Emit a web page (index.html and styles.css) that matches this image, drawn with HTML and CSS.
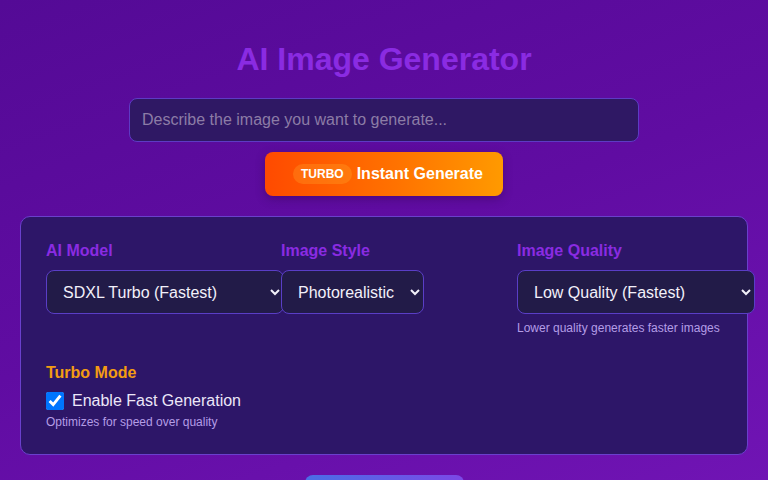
FILE: index.html
```html
<!DOCTYPE html>
<html lang="en">
<head>
<meta charset="utf-8">
<title>AI Image Generator</title>
<link rel="stylesheet" href="styles.css">
</head>
<body>
<div class="container">
  <h1 class="title">AI Image Generator</h1>
  <input class="prompt" type="text" placeholder="Describe the image you want to generate...">
  <button class="turbo-btn"><span class="badge">TURBO</span><span>Instant Generate</span></button>
  <div class="panel">
    <div class="grid">
      <div class="field">
        <label class="label">AI Model</label>
        <select class="select full"><option>SDXL Turbo (Fastest)</option></select>
      </div>
      <div class="field front">
        <label class="label">Image Style</label>
        <select class="select"><option>Photorealistic</option></select>
      </div>
      <div class="field">
        <label class="label">Image Quality</label>
        <select class="select full"><option>Low Quality (Fastest)</option></select>
        <div class="help">Lower quality generates faster images</div>
      </div>
      <div class="field">
        <label class="label turbo">Turbo Mode</label>
        <label class="check"><input type="checkbox" checked><span>Enable Fast Generation</span></label>
        <div class="help tight">Optimizes for speed over quality</div>
      </div>
    </div>
  </div>
  <div class="actions">
    <button class="gen-btn">Generate Image</button>
  </div>
</div>
</body>
</html>
```

FILE: styles.css
```css
html, body {
  margin: 0;
  height: 100%;
}
body {
  background: linear-gradient(160deg, #540a96 0%, #600ca2 50%, #7014b4 100%);
  font-family: "Liberation Sans", Arial, sans-serif;
  color: #ece8f6;
  overflow: hidden;
}
.container {
  padding: 41px 20px 0;
  display: flex;
  flex-direction: column;
  align-items: center;
}
.title {
  margin: 0 0 20px;
  font-size: 32px;
  line-height: 37px;
  font-weight: bold;
  color: #8a2be2;
}
.prompt {
  box-sizing: border-box;
  width: 510px;
  height: 44px;
  padding: 12px;
  font-family: inherit;
  font-size: 16px;
  color: #ece8f6;
  background: #2f1864;
  border: 1px solid #5d3bc4;
  border-radius: 8px;
  outline: none;
}
.prompt::placeholder {
  color: #8c7ca6;
}
.turbo-btn {
  margin-top: 10px;
  box-sizing: border-box;
  width: 238px;
  height: 44px;
  padding: 0 20px 0 28px;
  display: flex;
  align-items: center;
  gap: 5px;
  border: none;
  border-radius: 8px;
  background: linear-gradient(90deg, #ff4a00 0%, #ff7200 55%, #ff9a00 100%);
  color: #fff;
  font-family: inherit;
  font-size: 16px;
  font-weight: bold;
  box-shadow: 0 3px 10px rgba(40, 0, 60, 0.35);
}
.badge {
  padding: 3px 8px;
  border-radius: 10px;
  background: rgba(255, 200, 60, 0.22);
  font-size: 12px;
  font-weight: bold;
}
.panel {
  margin-top: 20px;
  box-sizing: border-box;
  width: 728px;
  padding: 25px 17px 25px 25px;
  background: #2d1668;
  border: 1px solid #6a40cc;
  border-radius: 10px;
}
.grid {
  display: grid;
  grid-template-columns: 212px 213px 212px;
  column-gap: 23px;
  row-gap: 29px;
}
.field {
  min-width: 0;
}
.field.front {
  position: relative;
  z-index: 1;
}
.label {
  display: block;
  margin-bottom: 10px;
  font-size: 16px;
  line-height: 18px;
  font-weight: bold;
  color: #8a2be2;
}
.label.turbo {
  color: #f39c12;
  margin-bottom: 10px;
}
.select {
  height: 44px;
  padding: 12px;
  font-family: inherit;
  font-size: 16px;
  color: #f2f0fa;
  background: #221b48;
  border: 1px solid #5a3ec6;
  border-radius: 8px;
}
.select.full {
  box-sizing: content-box;
  width: 100%;
  height: 18px;
}
.help {
  margin-top: 7px;
  font-size: 12px;
  line-height: 14px;
  color: #b49de6;
}
.help.tight {
  margin-top: 5px;
}
.check {
  display: flex;
  align-items: center;
  gap: 8px;
  font-size: 16px;
  line-height: 18px;
  color: #ece6f8;
}
.check input {
  margin: 0;
  width: 18px;
  height: 18px;
}
.actions {
  margin-top: 20px;
}
.gen-btn {
  width: 159px;
  padding: 15px 24px 11px;
  line-height: 18px;
  border: none;
  border-radius: 8px;
  background: linear-gradient(90deg, #4a6ee6, #7c48e6);
  color: #fff;
  font-family: inherit;
  font-size: 16px;
  font-weight: bold;
}
```
